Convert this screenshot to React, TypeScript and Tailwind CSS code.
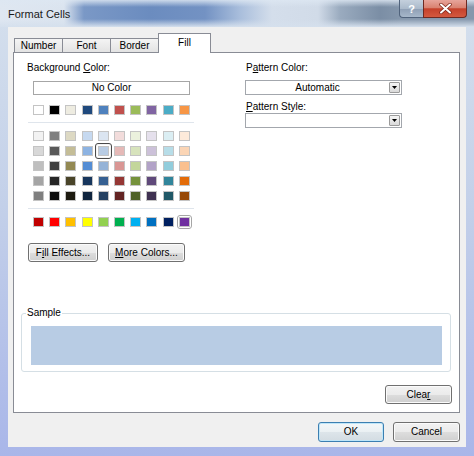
import React from "react";

const firstRow = ["#ffffff", "#000000", "#eeece1", "#1f497d", "#4f81bd", "#c0504d", "#9bbb59", "#8064a2", "#4bacc6", "#f79646"];

const tintRows = [
  ["#f2f2f2", "#7f7f7f", "#ddd9c3", "#c6d9f0", "#dbe5f1", "#f2dcdb", "#ebf1dd", "#e5e0ec", "#dbeef3", "#fdeada"],
  ["#d8d8d8", "#595959", "#c4bd97", "#8db3e2", "#b8cce4", "#e5b9b7", "#d7e3bc", "#ccc1d9", "#b7dde8", "#fbd5b5"],
  ["#bfbfbf", "#3f3f3f", "#938953", "#548dd4", "#95b3d7", "#d99694", "#c3d69b", "#b2a2c7", "#92cddc", "#fac08f"],
  ["#a5a5a5", "#262626", "#494429", "#17365d", "#366092", "#953734", "#76923c", "#5f497a", "#31859b", "#e36c09"],
  ["#7f7f7f", "#0c0c0c", "#1d1b10", "#0f243e", "#244061", "#632423", "#4f6128", "#3f3151", "#205867", "#974806"],
];

const standardRow = ["#c00000", "#ff0000", "#ffc000", "#ffff00", "#92d050", "#00b050", "#00b0f0", "#0070c0", "#002060", "#7030a0"];

function Swatch({ color, selected, hot }: { color: string; selected?: boolean; hot?: boolean }) {
  return (
    <div className="relative w-[11px] h-[10px] border border-[#c4c4c4]" style={{ backgroundColor: color }}>
      {selected && (
        <span className="absolute -inset-[4px] rounded-[3px] border border-[#4a4a4a] shadow-[inset_0_0_0_1px_#f4f4f4]" />
      )}
      {hot && <span className="absolute -inset-[3px] rounded-[3px] border border-[#a6a6a6]" />}
    </div>
  );
}

function Btn({ children, className = "", isDefault }: { children: React.ReactNode; className?: string; isDefault?: boolean }) {
  return (
    <button
      type="button"
      className={`flex items-center justify-center rounded-[3px] border text-[10px] leading-[12px] text-black ${
        isDefault
          ? "border-[#3c7fb1] shadow-[inset_0_0_0_1px_#bfe6f9] bg-[linear-gradient(180deg,#f3f7f9_0%,#eaf0f3_50%,#dde5ea_51%,#d3dce2_100%)]"
          : "border-[#707070] shadow-[inset_0_0_0_1px_#fbfbfb] bg-[linear-gradient(180deg,#f2f2f2_0%,#ebebeb_50%,#dddddd_51%,#cfcfcf_100%)]"
      } ${className}`}
    >
      {children}
    </button>
  );
}

function Dropdown({ value }: { value?: string }) {
  return (
    <div className="flex items-center w-[157px] h-[15px] border border-[#a3a7ad] bg-white">
      <span className="flex-1 text-center leading-[12px]">{value}</span>
      <span className="flex items-center justify-center w-[11px] h-[11px] mr-[1px] border border-[#9b9b9b] rounded-[1px] bg-[linear-gradient(180deg,#f5f5f5,#d9d9d9)]">
        <svg width="5" height="3" viewBox="0 0 5 3">
          <polygon points="0,0 5,0 2.5,3" fill="#000" />
        </svg>
      </span>
    </div>
  );
}

function Tab({ label, active }: { label: string; active?: boolean }) {
  if (active) {
    return (
      <div className="relative z-10 -mb-px h-[20px] w-[53px] border-l border-t border-r border-[#898c95] bg-white pt-[3px] text-center leading-[12px]">
        {label}
      </div>
    );
  }
  return (
    <div className="flex h-[14px] w-[48px] items-center justify-center border-l border-t border-[#898c95] bg-[linear-gradient(180deg,#f4f4f4,#e3e3e3)] leading-[12px]">
      {label}
    </div>
  );
}

export default function App() {
  return (
    <div className="flex h-[456px] w-[474px] flex-col overflow-hidden bg-[linear-gradient(180deg,#d5e0ed_0%,#c3d0e9_45%,#a9b6e9_100%)] font-['Liberation_Sans',Arial,sans-serif] text-[10px] leading-[12px] text-black">
      {/* title bar */}
      <div className="flex h-[27px] shrink-0 items-start pl-[8px] pr-[7px] bg-[linear-gradient(180deg,rgba(221,231,242,0.85)_0px,rgba(221,231,242,0)_7px,rgba(221,231,242,0)_19px,rgba(213,224,237,1)_27px),linear-gradient(90deg,#dfe7f1_0px,#dbe4ef_64px,#7a98c6_84px,#6b8cbf_150px,#7392c3_205px,#a9bedc_240px,#d4deeb_272px,#d1dbe8_318px,#9aabbf_340px,#7b8ea5_380px,#8597ac_400px)]">
        <span className="mt-[8px] text-[11px] leading-[12px] text-[#1a1a1a]">Format Cells</span>
        <div className="ml-auto flex h-[18px]">
          <div className="flex w-[24px] items-center justify-center rounded-bl-[4px] border-b border-l border-[#50637c] bg-[linear-gradient(180deg,#c4d0dd_0%,#abbacb_50%,#8e9fb5_51%,#a6b7ca_100%)] text-[11px] font-bold text-white">
            ?
          </div>
          <div className="flex w-[44px] items-center justify-center rounded-br-[4px] border-b border-l border-r border-[#6e2a22] bg-[linear-gradient(180deg,#e7a59b_0%,#d98271_45%,#c5412b_52%,#d4593f_100%)]">
            <svg width="13" height="11" viewBox="0 0 13 11">
              <path d="M2 1.5 L11 9.5 M11 1.5 L2 9.5" stroke="#7a2418" strokeWidth="3.4" strokeLinecap="round" />
              <path d="M2 1.5 L11 9.5 M11 1.5 L2 9.5" stroke="#ffffff" strokeWidth="2" strokeLinecap="round" />
            </svg>
          </div>
        </div>
      </div>

      {/* client area */}
      <div className="mx-[8px] mb-[9px] flex flex-1 flex-col bg-[#f0f0f0] pl-[5px] pr-[6px] pt-[6px]">
        <div className="flex h-[19px] items-end pl-[1px]">
          <Tab label="Number" />
          <Tab label="Font" />
          <Tab label="Border" />
          <Tab label="Fill" active />
        </div>

        <div className="flex h-[361px] w-[447px] flex-col border border-[#898c95] bg-white pl-[13px] pt-[9px]">
          <div className="flex">
            <div className="flex w-[219px] flex-col">
              <span>
                Background <span className="underline">C</span>olor:
              </span>
              <div className="ml-[6px] mt-[7px] flex h-[14px] w-[157px] items-center justify-center border border-[#a6a6a6]">
                No Color
              </div>
              <div className="ml-[6px] mt-[10px] flex gap-x-[5.2px]">
                {firstRow.map((c) => (
                  <Swatch key={c} color={c} />
                ))}
              </div>
              <div className="ml-[1px] mt-[7px] h-px w-[166px] bg-[#dfe5ec]" />
              <div className="ml-[6px] mt-[8px] grid w-fit grid-cols-[repeat(10,11px)] gap-x-[5.2px] gap-y-[5px]">
                {tintRows.map((row, r) =>
                  row.map((c, i) => <Swatch key={`${r}-${i}`} color={c} selected={r === 1 && i === 4} />)
                )}
              </div>
              <div className="ml-[1px] mt-[7px] h-px w-[166px] bg-[#dfe5ec]" />
              <div className="ml-[6px] mt-[8px] flex gap-x-[5.2px]">
                {standardRow.map((c, i) => (
                  <Swatch key={c} color={c} hot={i === 9} />
                ))}
              </div>
              <div className="ml-[1px] mt-[16px] flex gap-[10px]">
                <Btn className="h-[19px] w-[70px]">
                  F<span className="underline">i</span>ll Effects...
                </Btn>
                <Btn className="h-[19px] w-[77px]">
                  <span className="underline">M</span>ore Colors...
                </Btn>
              </div>
            </div>

            <div className="flex flex-col">
              <span>
                P<span className="underline">a</span>ttern Color:
              </span>
              <div className="-ml-px mt-[6px]">
                <Dropdown value="Automatic" />
              </div>
              <span className="mt-[6px]">
                <span className="underline">P</span>attern Style:
              </span>
              <div className="-ml-px">
                <Dropdown />
              </div>
            </div>
          </div>

          <fieldset className="ml-[-6px] mt-[45px] w-[430px] rounded-[3px] border border-[#d5dfe5] pb-[6px] pt-[7px]">
            <legend className="ml-[4px] px-px leading-[12px]">Sample</legend>
            <div className="ml-[9px] h-[39px] w-[411px] bg-[#b8cce4]" />
          </fieldset>

          <div className="mt-[13px] flex justify-end pr-[7px]">
            <Btn className="h-[19px] w-[67px]">
              Clea<span className="underline">r</span>
            </Btn>
          </div>
        </div>

        <div className="mt-[9px] flex justify-end gap-[9px]">
          <Btn isDefault className="h-[20px] w-[66px]">
            OK
          </Btn>
          <Btn className="h-[20px] w-[67px]">Cancel</Btn>
        </div>
      </div>
    </div>
  );
}
